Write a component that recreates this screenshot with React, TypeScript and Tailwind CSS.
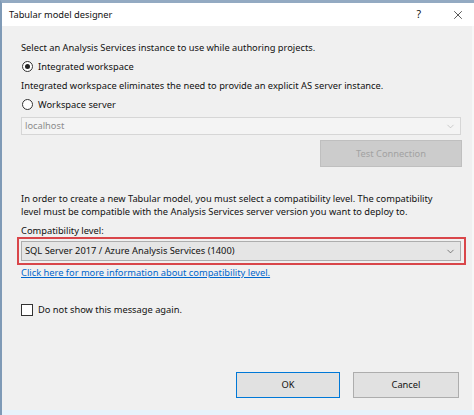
import { ChevronDown, X } from "lucide-react";

const font = { fontFamily: '"Noto Sans", "Liberation Sans", sans-serif' };

const Radio = ({ checked, label }: { checked?: boolean; label: string }) => (
  <div className="flex items-center h-[19px]">
    <span className="ml-[1px] w-[11px] h-[11px] rounded-full border border-[#333] bg-white flex items-center justify-center">
      {checked && <span className="w-[5px] h-[5px] rounded-full bg-[#222]" />}
    </span>
    <span className="ml-[5px]">{label}</span>
  </div>
);

export default function App() {
  return (
    <div
      className="w-[474px] h-[415px] flex flex-col bg-[#f0f0f0] border-t-[3px] border-l-[2px] border-t-[#93aac2] border-l-[#7f9ab6] text-[9.3px] text-[#111] overflow-hidden"
      style={font}
    >
      {/* Title bar */}
      <div className="h-[23px] bg-white flex items-center pl-[7px] shrink-0">
        <span className="text-[9.3px] text-[#111]">Tabular model designer</span>
        <span className="ml-auto text-[10.5px] mr-[30px]">?</span>
        <X size={14} strokeWidth={1.2} className="mr-[9px]" />
      </div>

      {/* Body */}
      <div className="flex-1 flex flex-col pl-[19px] pr-[10px] pt-[12px] border-r-[2px] border-r-[#f7f7f7]">
        <div className="h-[19px] flex items-center">
          Select an Analysis Services instance to use while authoring projects.
        </div>
        <Radio checked label="Integrated workspace" />
        <div className="h-[19px] flex items-center">
          Integrated workspace eliminates the need to provide an explicit AS server instance.
        </div>
        <Radio label="Workspace server" />

        <div className="mt-[3px] h-[18px] w-[440px] border border-[#d6d6d6] bg-[#f4f4f4] flex items-center pl-[3px] text-[#8c8c8c]">
          localhost
          <ChevronDown size={11} strokeWidth={1.2} className="ml-auto mr-[4px] text-[#a8a8a8]" />
        </div>

        <div className="mt-[5px] flex justify-end w-[441px]">
          <div className="w-[142px] h-[27px] bg-[#cccccc] border border-[#bfbfbf] flex items-center justify-center text-[#a2a2a2]">
            Test Connection
          </div>
        </div>

        <p className="mt-[26px] leading-[12.5px] w-[422px]">
          In order to create a new Tabular model, you must select a compatibility level. The compatibility level must be compatible with the Analysis Services server version you want to deploy to.
        </p>

        <div className="mt-[6px] h-[13px] flex items-center">Compatibility level:</div>

        <div className="-ml-[4px] w-[449px] h-[28px] border-2 border-[#d9464a] p-[2px]">
          <div className="h-full w-[440px] bg-[#e5e5e5] border border-[#adadad] flex items-center pl-[3px]">
            SQL Server 2017 / Azure Analysis Services (1400)
            <ChevronDown size={11} strokeWidth={1.4} className="ml-auto mr-[4px] text-[#444]" />
          </div>
        </div>

        <div className="h-[16px] flex items-center">
          <span className="text-[#0066cc] underline">Click here for more information about compatibility level.</span>
        </div>

        <div className="mt-[21px] h-[16px] flex items-center">
          <span className="w-[12px] h-[12px] border border-[#333] bg-white" />
          <span className="ml-[5px]">Do not show this message again.</span>
        </div>

        <div className="mt-[54px] flex justify-end gap-[13px] pr-[3px]">
          <div className="w-[104px] h-[26px] bg-[#e1e1e1] border-[1.5px] border-[#0078d7] flex items-center justify-center">
            OK
          </div>
          <div className="w-[106px] h-[26px] bg-[#e1e1e1] border border-[#adadad] flex items-center justify-center">
            Cancel
          </div>
        </div>
      </div>

      <div className="h-[5px] bg-[#e7f3fb] shrink-0" />
    </div>
  );
}
